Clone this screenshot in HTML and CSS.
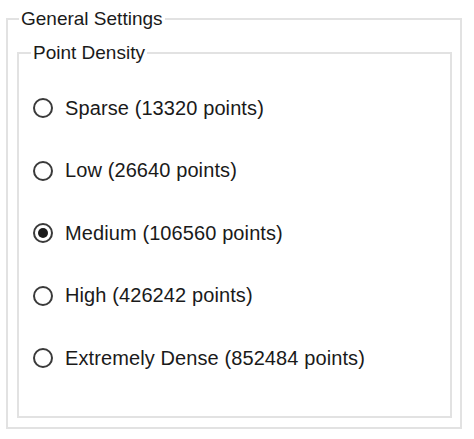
FILE: index.html
```html
<!DOCTYPE html>
<html lang="en">
<head>
    <meta charset="UTF-8">
    <title>General Settings</title>
    <link rel="stylesheet" href="styles.css">
</head>
<body>
    <fieldset class="group outer">
        <legend>General Settings</legend>
        <fieldset class="group inner">
            <legend>Point Density</legend>
            <div class="options">
                <label class="option"><span class="radio"></span>Sparse (13320 points)</label>
                <label class="option"><span class="radio"></span>Low (26640 points)</label>
                <label class="option"><span class="radio checked"></span>Medium (106560 points)</label>
                <label class="option"><span class="radio"></span>High (426242 points)</label>
                <label class="option"><span class="radio"></span>Extremely Dense (852484 points)</label>
            </div>
        </fieldset>
    </fieldset>
</body>
</html>
```

FILE: styles.css
```css
* {
    box-sizing: border-box;
}
body {
    margin: 0;
    background: #fff;
    font-family: "Liberation Sans", Arial, sans-serif;
    font-size: 19px;
    color: #1a1a1a;
}
.group {
    border: 2px solid #e2e2e2;
    margin: 0;
    min-width: 0;
}
.group legend {
    line-height: 22px;
    padding: 0 2px;
    margin-left: 2px;
}
.outer {
    width: 456px;
    margin: 8px 0 0 6px;
    padding: 12px 8px 9px 9px;
}
.inner {
    width: 435px;
    padding: 33px 14px 47px 14px;
}
.inner legend {
    margin-left: -2px;
}
.options {
    display: flex;
    flex-direction: column;
    gap: 40.5px;
}
.option {
    display: flex;
    align-items: center;
    height: 22px;
    gap: 12px;
    font-size: 20px;
    letter-spacing: 0.1px;
}
.radio {
    width: 20px;
    height: 20px;
    border: 2px solid #3a3a3a;
    border-radius: 50%;
    display: flex;
    align-items: center;
    justify-content: center;
}
.radio.checked::after {
    content: "";
    width: 10px;
    height: 10px;
    border-radius: 50%;
    background: #1a1a1a;
}
```
